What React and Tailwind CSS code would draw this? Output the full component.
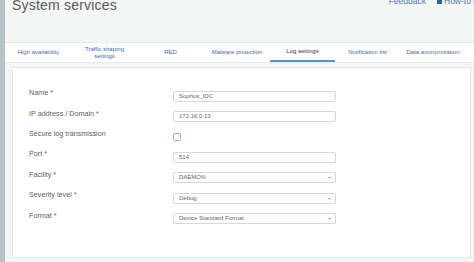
import React from 'react';

const tabs = [
  { label: 'High availability', w: 'w-[67px]' },
  { label: 'Traffic shaping settings', w: 'w-[65px]', two: true },
  { label: 'RED', w: 'w-[67px]' },
  { label: 'Malware protection', w: 'w-[66px]' },
  { label: 'Log settings', w: 'w-[65px]', active: true },
  { label: 'Notification list', w: 'w-[65px]' },
  { label: 'Data anonymization', w: 'w-[66px]' },
];

function Chevron() {
  return (
    <svg className="w-[5px] h-[5px]" viewBox="0 0 10 10" fill="none" stroke="#6b7a88" strokeWidth="1.6">
      <path d="M2 3.5l3 3 3-3" />
    </svg>
  );
}

function Field({ value, select }) {
  return (
    <div className="w-[163px] h-[11px] border border-[#d3d7db] rounded-[2px] bg-white flex items-center justify-between pl-[5px] pr-[3px] text-[6px] text-[#666]">
      <span>{value}</span>
      {select && <Chevron />}
    </div>
  );
}

export default function App() {
  const rows = [
    { label: 'Name *', value: 'Sophos_IDC' },
    { label: 'IP address / Domain *', value: '172.16.0.13' },
    { label: 'Secure log transmission', checkbox: true },
    { label: 'Port *', value: '514' },
    { label: 'Facility *', value: 'DAEMON', select: true },
    { label: 'Severity level *', value: 'Debug', select: true },
    { label: 'Format *', value: 'Device Standard Format', select: true },
  ];

  return (
    <div className="flex w-[474px] h-[262px] overflow-hidden bg-[#f4f5f5] font-['Liberation_Sans',sans-serif]">
      {/* sidebar edge */}
      <div className="w-[5px] shrink-0 bg-[#b5c2c6]" />

      <div className="flex-1 flex flex-col min-w-0">
        {/* header */}
        <div className="h-[42px] shrink-0 flex justify-between items-start">
          <div className="ml-[7px] -mt-[2px] text-[14px] leading-none text-[#5a5a5a] tracking-[0.2px]">System services</div>
          <div className="flex items-center -mt-[3px] text-[8.5px] leading-none text-[#4c7bb5] whitespace-nowrap">
            <span className="mr-[11px]">Feedback</span>
            <span className="w-[5px] h-[6px] bg-[#2f63a8] mr-[2px]" />
            <span className="w-[30px] overflow-hidden">How-to guides</span>
          </div>
        </div>

        {/* tabs */}
        <div className="h-[21px] shrink-0 bg-white border-y border-[#e9eaeb] flex text-[6px] leading-[7px] text-[#3f6da8]">
          {tabs.map((t) => (
            <div
              key={t.label}
              className={`${t.w} shrink-0 flex items-center justify-center text-center ${t.active ? 'text-[#333] border-b-[2px] border-[#4a97d2]' : ''}`}
            >
              {t.two ? (
                <span>Traffic shaping<br />settings</span>
              ) : (
                t.label
              )}
            </div>
          ))}
        </div>

        {/* panel */}
        <div className="flex-1 mt-[4px] ml-[7px] mr-[3px] mb-[4px] bg-white border border-[#e6e8e9] pl-[16px] pt-[18px]">
          {rows.map((r) => (
            <div key={r.label} className="h-[20.4px] flex items-center">
              <div className="w-[144px] -mt-[5px] text-[7.2px] text-[#606060]">{r.label}</div>
              {r.checkbox ? (
                <div className="w-[8px] h-[8px] border border-[#8fb0cc] rounded-[1.5px] bg-white" />
              ) : (
                <Field value={r.value} select={r.select} />
              )}
            </div>
          ))}
        </div>
      </div>
    </div>
  );
}
